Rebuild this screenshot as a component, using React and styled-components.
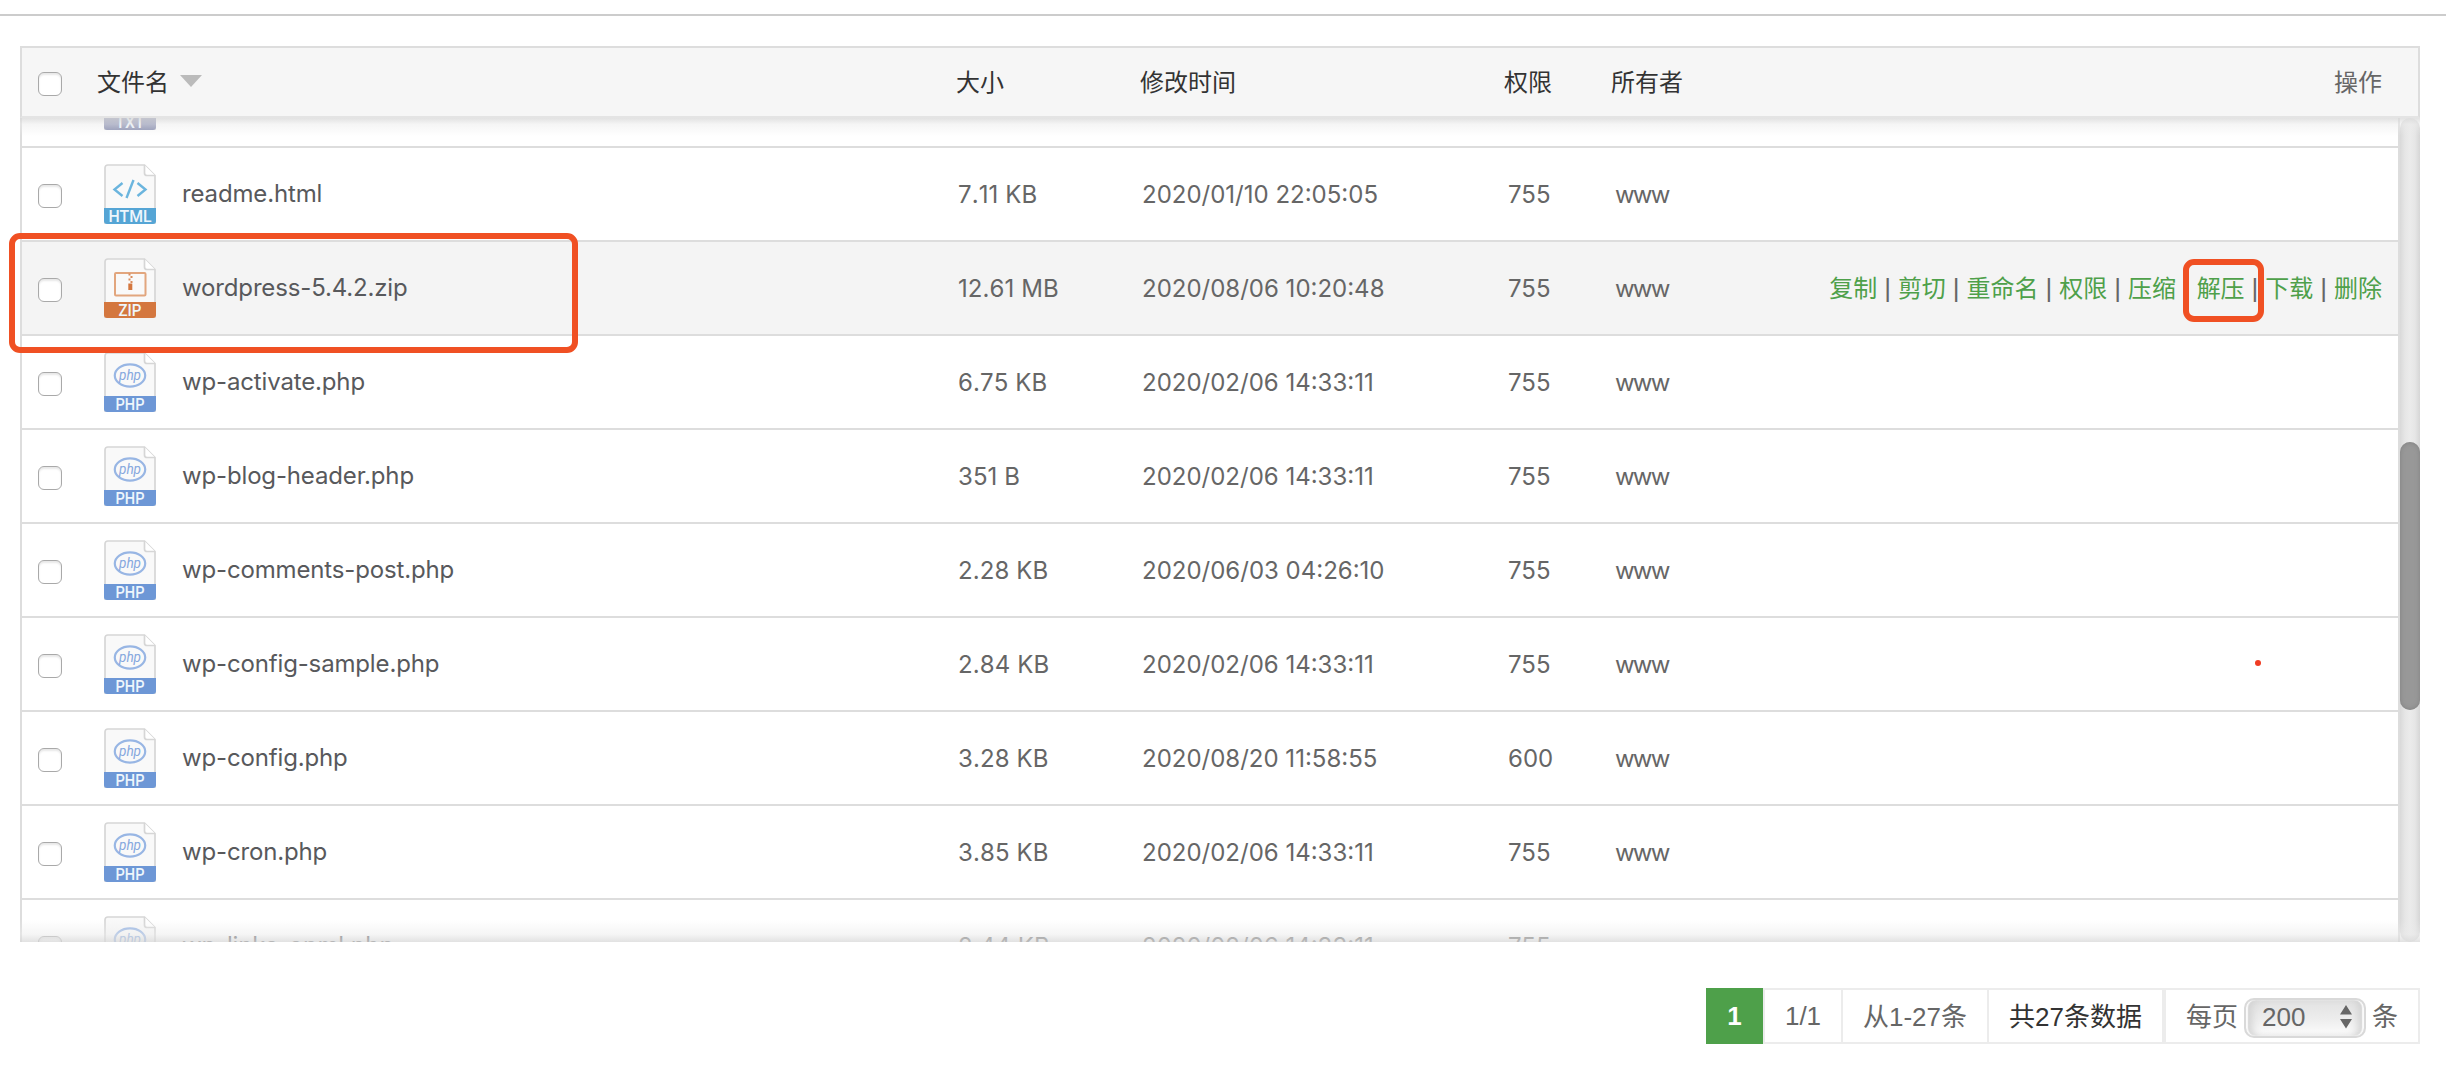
import React from 'react';
import styled, { createGlobalStyle } from 'styled-components';

const GlobalStyle = createGlobalStyle`
  * {
    box-sizing: border-box;
  }
  body {
    margin: 0;
    background: #fff;
  }
`

const Page = styled.div`
  position: relative;
  width: 2446px;
  height: 1066px;
  padding-top: 14px;
  overflow: hidden;
  color: #666;
  font-family: Inter, "Noto Sans CJK SC", sans-serif;
  font-size: 24px;
`

const TopLine = styled.div`
  height: 2px;
  background: #ccc;
`

const FileTable = styled.div`
  width: 2400px;
  margin: 30px 0 0 20px;
`

const columns = '59px 859px 184px 364px 107px 1fr auto';

const TableHead = styled.div`
  display: grid;
  grid-template-columns: ${columns};
  align-items: center;
  height: 72px;
  padding: 0 36px 0 16px;
  border: 2px solid #ddd;
  border-bottom-color: #e4e4e4;
  background: #f6f6f6;
  color: #333;
`

const HeadCell = styled.div`
  display: flex;
  align-items: center;
  gap: 11px;
  padding-bottom: 3px;
  color: ${props => props.$muted ? '#666' : '#333'};
`

const SortArrow = styled.i`
  border: 11px solid transparent;
  border-top: 12px solid #bbb;
  border-bottom: 0;
`

const Checkbox = styled.input.attrs({ type: 'checkbox' })`
  appearance: none;
  width: 24px;
  height: 24px;
  margin: 4px 0 0;
  border: 1.5px solid #a9a9a9;
  border-radius: 6px;
  background: #fff;
  box-shadow: inset 0 2px 2px #e8e8e8;
`

const TableBody = styled.div`
  position: relative;
  display: flex;
  height: 824px;
  overflow: hidden;
`

const RowList = styled.div`
  display: flex;
  flex-direction: column;
  width: 2380px;
  height: 940px;
  margin-top: -64px;
  border: 2px solid #ddd;
  border-top: 0;
`

const FileRow = styled.div`
  display: grid;
  flex: none;
  grid-template-columns: ${columns};
  align-items: center;
  height: 94px;
  padding: 0 16px;
  border-bottom: 2px solid #ddd;
  background: ${props => props.$active ? '#f4f4f4' : '#fff'};
`

const NameCell = styled.div`
  display: flex;
  align-items: center;
  gap: 26px;
  padding-left: 7px;
  color: #58595c;
`

const FileName = styled.span`
  margin-top: -2px;
  letter-spacing: -0.15px;
`

const SizeCell = styled.div`
  padding-left: 2px;
  font-kerning: none;
  letter-spacing: 0.1px;
`

const DateCell = styled.div`
  padding-left: 2px;
`

const ModeCell = styled.div`
  padding-left: 4px;
`

const OwnerCell = styled.div`
  padding-left: 4px;
  letter-spacing: -1.8px;
`

const Actions = styled.div`
  display: flex;
  align-items: center;
`

const Action = styled.a`
  padding-bottom: 3px;
  color: #4ea04a;
`

const Separator = styled.span`
  width: 20.7px;
  font-family: "Liberation Sans", sans-serif;
  font-size: 26px;
  line-height: 28px;
  text-align: center;
`

const Track = styled.div`
  width: 20px;
  height: 824px;
  padding-top: 324px;
  border-radius: 10px;
  background: linear-gradient(90deg, #d9d9d9, #e6e6e6 25%, #ebebeb 50%, #e6e6e6 75%, #d6d6d6);
`

const Thumb = styled.div`
  height: 268px;
  border-radius: 10px;
  background: #989898;
  box-shadow: inset 0 0 5px #808080;
`

const Shade = styled.div`
  position: absolute;
  left: 0;
  right: 0;
  height: ${props => props.$bottom ? 22 : 18}px;
  ${props => props.$bottom ? 'bottom: 0;' : 'top: 0;'}
  background: linear-gradient(
    ${props => props.$bottom ? '0deg' : '180deg'},
    rgba(216, 216, 216, 0.75),
    rgba(235, 235, 235, 0.5) 35%,
    rgba(255, 255, 255, 0)
  );
`

const Pager = styled.div`
  display: flex;
  justify-content: flex-end;
  width: 2400px;
  height: 56px;
  margin: 46px 0 0 20px;
  font-family: "Liberation Sans", "Noto Sans CJK SC", sans-serif;
  font-size: 26px;
`

const PageCell = styled.div`
  display: flex;
  align-items: center;
  justify-content: center;
  width: ${props => props.$width}px;
  padding-bottom: ${props => props.$cjk ? 3 : 0}px;
  border: 2px solid #ececec;
  border-right-width: ${props => props.$closed ? 2 : 0}px;
  color: ${props => props.$strong ? '#333' : '#666'};
  white-space: nowrap;
`

const CurrentPage = styled(PageCell)`
  border: 0;
  background: #4ea04a;
  color: #fff;
  font-weight: 700;
`

const PageSize = styled.span`
  display: flex;
  align-items: center;
  justify-content: space-between;
  width: 122px;
  height: 40px;
  margin: 7px 6px 0;
  padding: 0 12px 2px 16px;
  border: 2px solid #d9d9d9;
  border-radius: 10px;
  background: linear-gradient(#e2e2e2, #ececec 50%, #fdfdfd);
  box-shadow: inset 2px 0 1px #fafafa, inset -2px 0 1px #fafafa, inset 9px 0 8px -3px #d2d2d2, inset -9px 0 8px -3px #d2d2d2;
`

const Mark = styled.div`
  position: absolute;
  left: ${props => props.$x}px;
  top: ${props => props.$y}px;
  width: ${props => props.$w}px;
  height: ${props => props.$h}px;
  border: 6px solid #f05023;
  border-radius: 11px;
`

const RedDot = styled.div`
  position: absolute;
  left: 2255px;
  top: 660px;
  width: 6px;
  height: 6px;
  border-radius: 50%;
  background: #f03c23;
`

const IconSvg = styled.svg`
  display: block;
  overflow: visible;
  font-family: Roboto, sans-serif;
`

const iconColors = {
  HTML: '#55a5d5',
  ZIP: '#d4773f',
  PHP: '#6d97d6',
  TXT: '#858bae',
};

const labelWidth = { HTML: 43, ZIP: 23, PHP: 29, TXT: 29 };

function FileIcon({ type }) {
  return (
    <IconSvg width="52" height="60" viewBox="0 0 52 60">
      <path d="M4 1H40.5L51 11.5V59H1V4Q1 1 4 1Z" fill="#f9f9f9" stroke="#d6d6d6" strokeWidth="1.7" />
      <path d="M40.5 1V9Q40.5 11.5 43 11.5H51" fill="#fff" stroke="#d6d6d6" strokeWidth="1.7" />
      {type === 'HTML' && (
        <g fill="none" stroke="#6bb5de" strokeWidth="2.4">
          <path d="M18.5 19L10.5 25.5L18.5 32" />
          <path d="M33.5 19L41.5 25.5L33.5 32" />
          <path d="M29.5 16L22.5 34" />
        </g>
      )}
      {type === 'ZIP' && (
        <g fill="none" stroke="#e2a67e" strokeWidth="2">
          <rect x="11" y="15" width="30.5" height="22.5" rx="1" />
          <path d="M24.5 16.5H26.5M26.500 19H28.5M24.5 21.5H26.5M26.5 24H28.5" stroke="#d98c5c" />
          <path d="M26.3 25.5V32" stroke="#d4773f" strokeWidth="4" />
        </g>
      )}
      {type === 'PHP' && (
        <g>
          <ellipse cx="26" cy="23.5" rx="15.2" ry="11.2" fill="none" stroke="#98b6e4" strokeWidth="2.2" />
          <text x="26" y="28" textAnchor="middle" textLength="22" lengthAdjust="spacingAndGlyphs" fontStyle="italic" fontSize="14.5" fill="#86a8de">php</text>
        </g>
      )}
      <path d="M0 44H52V57Q52 60 49 60H3Q0 60 0 57Z" fill={iconColors[type]} />
      <text x="26" y="58" textAnchor="middle" textLength={labelWidth[type]} lengthAdjust="spacingAndGlyphs" fontSize="17" fontWeight="500" fill="#eef6fc">{type}</text>
    </IconSvg>
  );
}

const files = [
  { type: 'TXT' },
  { type: 'HTML', name: 'readme.html', size: '7.11 KB', time: '2020/01/10 22:05:05', mode: '755', owner: 'www' },
  { type: 'ZIP', name: 'wordpress-5.4.2.zip', size: '12.61 MB', time: '2020/08/06 10:20:48', mode: '755', owner: 'www', active: true },
  { type: 'PHP', name: 'wp-activate.php', size: '6.75 KB', time: '2020/02/06 14:33:11', mode: '755', owner: 'www' },
  { type: 'PHP', name: 'wp-blog-header.php', size: '351 B', time: '2020/02/06 14:33:11', mode: '755', owner: 'www' },
  { type: 'PHP', name: 'wp-comments-post.php', size: '2.28 KB', time: '2020/06/03 04:26:10', mode: '755', owner: 'www' },
  { type: 'PHP', name: 'wp-config-sample.php', size: '2.84 KB', time: '2020/02/06 14:33:11', mode: '755', owner: 'www' },
  { type: 'PHP', name: 'wp-config.php', size: '3.28 KB', time: '2020/08/20 11:58:55', mode: '600', owner: 'www' },
  { type: 'PHP', name: 'wp-cron.php', size: '3.85 KB', time: '2020/02/06 14:33:11', mode: '755', owner: 'www' },
  { type: 'PHP', name: 'wp-links-opml.php', size: '2.44 KB', time: '2020/02/06 14:33:11', mode: '755' },
];

const actions = ['复制', '剪切', '重命名', '权限', '压缩', '解压', '下载', '删除'];

function File({ file }) {
  return (
    <FileRow $active={file.active}>
      <Checkbox />
      <NameCell>
        <FileIcon type={file.type} />
        <FileName>{file.name}</FileName>
      </NameCell>
      <SizeCell>{file.size}</SizeCell>
      <DateCell>{file.time}</DateCell>
      <ModeCell>{file.mode}</ModeCell>
      <OwnerCell>{file.owner}</OwnerCell>
      {file.active && (
        <Actions>
          {actions.map((text, index) => (
            <React.Fragment key={text}>
              {index > 0 && <Separator>|</Separator>}
              <Action>{text}</Action>
            </React.Fragment>
          ))}
        </Actions>
      )}
    </FileRow>
  );
}

export default function App() {
  return (
    <Page>
      <GlobalStyle />
      <TopLine />
      <FileTable>
        <TableHead>
          <Checkbox />
          <HeadCell>文件名<SortArrow /></HeadCell>
          <HeadCell>大小</HeadCell>
          <HeadCell>修改时间</HeadCell>
          <HeadCell>权限</HeadCell>
          <HeadCell>所有者</HeadCell>
          <HeadCell $muted>操作</HeadCell>
        </TableHead>
        <TableBody>
          <RowList>
            {files.map((file, index) => <File key={index} file={file} />)}
          </RowList>
          <Track>
            <Thumb />
          </Track>
          <Shade />
          <Shade $bottom />
        </TableBody>
      </FileTable>
      <Pager>
        <CurrentPage $width={57}>1</CurrentPage>
        <PageCell $width={78}>1/1</PageCell>
        <PageCell $width={146} $cjk>从1-27条</PageCell>
        <PageCell $width={177} $cjk $strong $closed>共27条数据</PageCell>
        <PageCell $width={256} $cjk $closed>
          每页
          <PageSize>
            200
            <svg width="12" height="24" viewBox="0 0 12 24">
              <path d="M6 0L12 9.5H0ZM0 14H12L6 23.5Z" fill="#666" />
            </svg>
          </PageSize>
          条
        </PageCell>
      </Pager>
      <Mark $x={9} $y={233} $w={569} $h={120} />
      <Mark $x={2183} $y={259} $w={81} $h={63} />
      <RedDot />
    </Page>
  );
}
